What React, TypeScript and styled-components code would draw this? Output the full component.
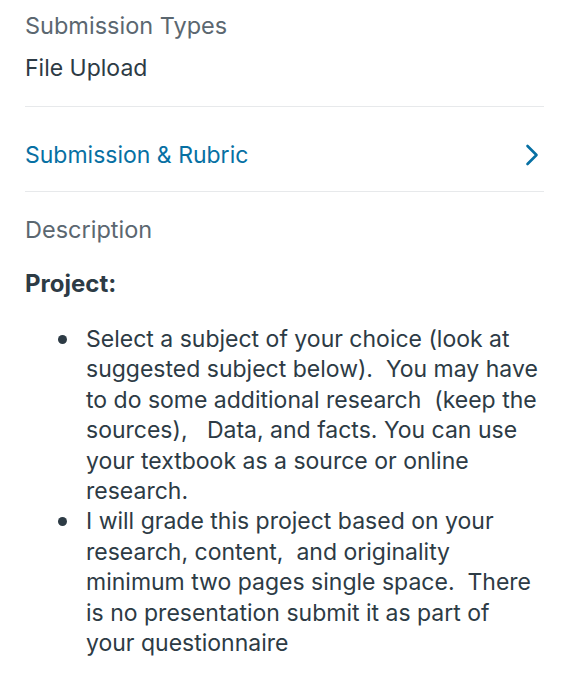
import React from "react";
import styled, { createGlobalStyle } from "styled-components";

const Global = createGlobalStyle`
  html, body { margin: 0; padding: 0; background: #ffffff; }
  body { font-family: Inter, "Open Sans", "Liberation Sans", sans-serif; -webkit-font-smoothing: antialiased; }
`;

const Page = styled.div`
  padding: 0 25px;
  display: flex;
  flex-direction: column;
`;

const Section = styled.section`
  padding: 11px 0 23px;
  border-bottom: 1px solid #e7e9eb;
`;

const Label = styled.div`
  font-size: 23.5px;
  line-height: 30px;
  color: #5b6770;
`;

const Value = styled.div`
  margin-top: 12px;
  font-size: 23px;
  line-height: 30px;
  color: #2d3b45;
`;

const LinkRow = styled.a`
  display: flex;
  align-items: center;
  justify-content: space-between;
  padding: 33px 0 21px;
  border-bottom: 1px solid #e7e9eb;
  color: #0770a3;
  text-decoration: none;
  font-size: 23px;
  line-height: 30px;
`;

const Chevron = styled.svg`
  width: 14px;
  height: 22px;
  margin-right: 5px;
  flex: none;
`;

const Description = styled.div`
  padding-top: 23px;
`;

const Heading = styled.div`
  margin-top: 24px;
  font-size: 24px;
  line-height: 30px;
  font-weight: 700;
  color: #2d3b45;
`;

const List = styled.ul`
  margin: 25px 0 0;
  padding: 0 0 0 61px;
  list-style: none;
  font-size: 23px;
  line-height: 30.4px;
  color: #2d3b45;
  white-space: pre-wrap;
`;

const Item = styled.li`
  position: relative;
  &::before {
    content: "";
    position: absolute;
    left: -28px;
    top: 11px;
    width: 9px;
    height: 9px;
    border-radius: 50%;
    background: #2d3b45;
  }
`;

export default function App() {
  return (
    <>
      <Global />
      <Page>
        <Section>
          <Label>Submission Types</Label>
          <Value>File Upload</Value>
        </Section>
        <LinkRow href="#">
          <span>Submission &amp; Rubric</span>
          <Chevron viewBox="0 0 14 22" fill="none">
            <path d="M2.5 2 L11.5 11 L2.5 20" stroke="#0770a3" strokeWidth="2.6" strokeLinecap="round" strokeLinejoin="round" />
          </Chevron>
        </LinkRow>
        <Description>
          <Label>Description</Label>
          <Heading>Project:</Heading>
          <List>
            <Item>{"Select a subject of your choice (look at suggested subject below).  You may have to do some additional research  (keep the sources),   Data, and facts. You can use your textbook as a source or online research."}</Item>
            <Item>{"I will grade this project based on your research, content,  and originality minimum two pages single space.  There is no presentation submit it as part of your questionnaire"}</Item>
          </List>
        </Description>
      </Page>
    </>
  );
}
